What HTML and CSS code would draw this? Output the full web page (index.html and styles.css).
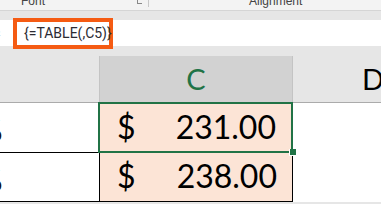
FILE: index.html
```html
<!DOCTYPE html>
<html>
<head>
    <meta charset="UTF-8">
    <title>Data Table</title>
    <link rel="stylesheet" href="styles.css">
</head>
<body>
    <div class="ribbon">
        <span class="group_label font_label">Font</span>
        <span class="launcher"></span>
        <span class="group_sep"></span>
        <span class="group_label align_label">Alignment</span>
    </div>
    <div class="band"></div>
    <div class="formula_bar">
        <span class="fx">&lsaquo;</span>
        <div class="formula_box">{=TABLE(,C5)}</div>
    </div>
    <div class="band band_low"></div>
    <div class="sheet">
        <div class="col_head"></div>
        <div class="col_head selected">C</div>
        <div class="col_head next">D</div>

        <div class="cell bordered"><span class="cut">%</span></div>
        <div class="cell money active">
            <span>$</span><span>231.00</span>
            <span class="fill_handle"></span>
        </div>
        <div class="cell"></div>

        <div class="cell bordered"><span class="cut">%</span></div>
        <div class="cell money boxed"><span>$</span><span>238.00</span></div>
        <div class="cell"></div>
    </div>
</body>
</html>
```

FILE: styles.css
```css
html,
body {
    margin: 0;
    width: 381px;
    height: 204px;
    overflow: hidden;
}
body {
    background: #e6e6e6;
    font-family: "Liberation Sans", Arial, sans-serif;
}

/* ribbon group captions, cut off at the top */
.ribbon {
    display: flex;
    height: 10px;
    background: #f3f3f3;
    border-bottom: 1px solid #d5d5d5;
    overflow: hidden;
}
.group_label {
    font-size: 12px;
    line-height: 12px;
    margin-top: -5px;
    color: #444;
}
.font_label {
    margin-left: 21px;
}
.launcher {
    width: 4px;
    height: 3px;
    margin: 0 0 0 92px;
    border-left: 1px solid #888;
    border-bottom: 1px solid #888;
}
.group_sep {
    width: 1px;
    height: 7px;
    margin-left: 6px;
    background: #c8c8c8;
}
.align_label {
    margin-left: 100px;
}

.band {
    height: 9px;
}
.band_low {
    height: 10px;
}

/* formula bar */
.formula_bar {
    display: flex;
    align-items: center;
    height: 26px;
    background: #fff;
}
.fx {
    width: 16px;
    margin-left: -3px;
    font-size: 11px;
    color: #999;
}
.formula_box {
    position: relative;
    z-index: 1;
    box-sizing: border-box;
    width: 100px;
    height: 31px;
    padding-left: 7px;
    border: 4px solid #f55b13;
    background: #fff;
    font-family: "Roboto", sans-serif;
    font-size: 14px;
    line-height: 23px;
    color: #2b2b33;
    white-space: nowrap;
}

/* worksheet */
.sheet {
    display: grid;
    grid-template-columns: 99px 194px 1fr;
    grid-template-rows: 47px 50px 49px;
    background: #fff;
}
.col_head {
    box-sizing: border-box;
    background: #e6e6e6;
    border-bottom: 1px solid #ababab;
    font-family: "Lato", sans-serif;
    font-size: 29px;
    line-height: 46px;
    text-align: center;
    color: #000;
}
.col_head.selected {
    background: #d2d2d2;
    border-left: 1px solid #c4c4c4;
    border-right: 1px solid #c4c4c4;
    color: #217346;
}
.col_head.next {
    text-align: left;
    padding-left: 69px;
    overflow: hidden;
}
.cell {
    box-sizing: border-box;
    overflow: hidden;
}
.cell.bordered {
    border-bottom: 1px solid #000;
}
.cut {
    display: block;
    margin: 10px 0 0 -20px;
    font-family: "Lato", sans-serif;
    font-size: 28px;
    color: #111;
}
.money {
    display: flex;
    justify-content: space-between;
    align-items: flex-end;
    padding: 0 16px 9px 18px;
    background: #fce4d6;
    font-family: "Lato", sans-serif;
    font-size: 32px;
    line-height: 1;
    color: #000;
}
.money.active {
    position: relative;
    overflow: visible;
    margin: -1px 0 0 -1px;
    border: 2px solid #217346;
    padding: 0 15px 8px 17px;
}
.money.boxed {
    border-left: 1px solid #000;
    border-right: 1px solid #000;
    border-bottom: 1px solid #000;
    padding: 0 15px 9px 17px;
}
.fill_handle {
    position: absolute;
    right: -5px;
    bottom: -5px;
    width: 6px;
    height: 6px;
    background: #217346;
    border: 1px solid #fff;
    border-width: 0 0 1px 1px;
}
```
